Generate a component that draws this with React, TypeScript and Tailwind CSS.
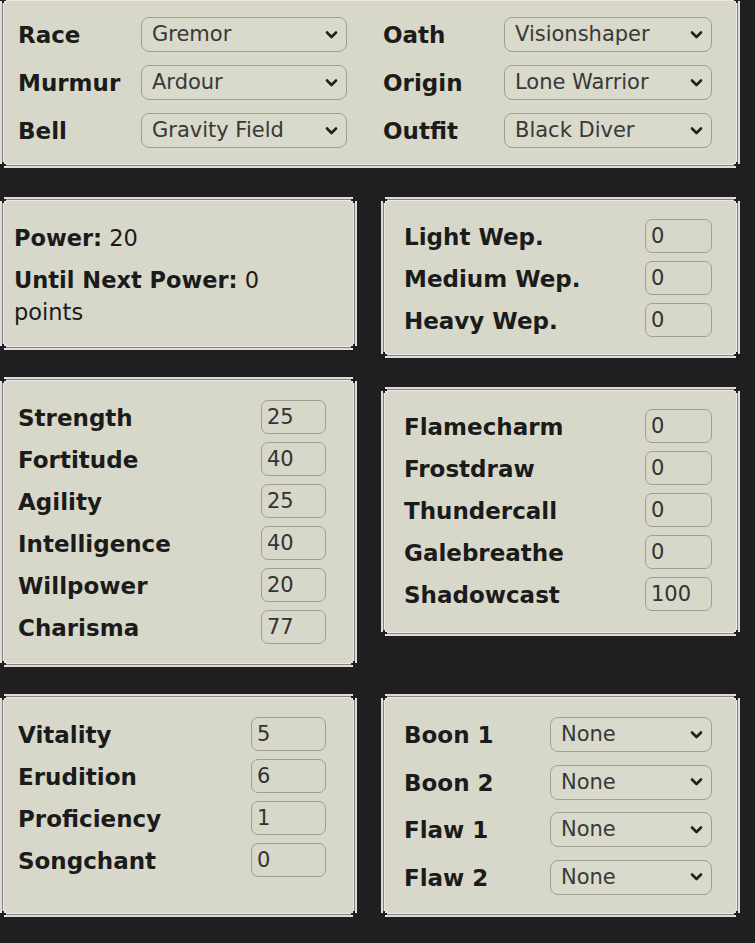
import type { ReactNode } from 'react'
import clsx from 'clsx'

const frame =
  'relative bg-[#d8d8ca] shadow-[inset_0_0_0_2px_#e2dada,inset_0_0_0_3px_#888080,inset_0_0_0_4px_#eee8e8]'

function Corner({ className }: { className: string }) {
  return <span className={clsx('absolute h-[6px] w-[6px] bg-[#1f1f1f] border-dotted border-[#ebe4e4]', className)} />
}

function Panel({ className, children }: { className?: string; children: ReactNode }) {
  return (
    <div className={clsx(frame, className)}>
      <Corner className="left-0 top-0 border-b-2 border-r-2" />
      <Corner className="right-0 top-0 border-b-2 border-l-2" />
      <Corner className="bottom-0 left-0 border-r-2 border-t-2" />
      <Corner className="bottom-0 right-0 border-l-2 border-t-2" />
      {children}
    </div>
  )
}

function Select({ value, className }: { value: string; className?: string }) {
  return (
    <div className={clsx('relative h-[35px]', className)}>
      <select
        defaultValue={value}
        className="h-full w-full appearance-none rounded-[8px] border border-[#a19f91] bg-[#d9d9cc] pl-[10px] text-[21px] leading-none text-[#383838] outline-none"
      >
        <option>{value}</option>
      </select>
      <svg
        className="pointer-events-none absolute right-[9px] top-1/2 -translate-y-1/2"
        width="13"
        height="9"
        viewBox="0 0 13 9"
        fill="none"
      >
        <path d="M2 2l4.5 4.5L11 2" stroke="#222" strokeWidth="2.6" strokeLinecap="round" strokeLinejoin="round" />
      </svg>
    </div>
  )
}

function NumberBox({ value, className }: { value: string; className?: string }) {
  return (
    <input
      defaultValue={value}
      className={clsx(
        'h-[34px] rounded-[7px] border border-[#a19f91] bg-transparent pl-[5px] text-[21px] text-[#333] outline-none',
        className,
      )}
    />
  )
}

function Label({ children, className }: { children: ReactNode; className?: string }) {
  return (
    <span className={clsx('translate-y-[1px] text-[23px] font-bold leading-none text-[#1b1b1b]', className)}>
      {children}
    </span>
  )
}

function StatRows({ rows, boxClass }: { rows: [string, string][]; boxClass: string }) {
  return (
    <div className="flex flex-col gap-[8px]">
      {rows.map(([name, value]) => (
        <div key={name} className="flex h-[34px] items-center justify-between">
          <Label>{name}</Label>
          <NumberBox value={value} className={boxClass} />
        </div>
      ))}
    </div>
  )
}

const identity: [string, string, string, string][] = [
  ['Race', 'Gremor', 'Oath', 'Visionshaper'],
  ['Murmur', 'Ardour', 'Origin', 'Lone Warrior'],
  ['Bell', 'Gravity Field', 'Outfit', 'Black Diver'],
]

export default function App() {
  return (
    <div className="min-h-screen overflow-hidden bg-[#1f1f1f] font-['DejaVu_Sans',sans-serif]">
      <div className="w-[740px]">
        <Panel className="-mt-[3px] pb-[20px] pl-[18px] pt-[20px]">
          <div className="grid grid-cols-[123px_206px_157px_208px] items-center gap-y-[13px]">
            {identity.map(([a, av, b, bv]) => (
              <div key={a} className="contents">
                <Label>{a}</Label>
                <Select value={av} />
                <Label className="pl-[36px]">{b}</Label>
                <Select value={bv} />
              </div>
            ))}
          </div>
        </Panel>

        <div className="mt-[29px] flex items-start gap-[24px]">
          <div className="flex w-[357px] flex-col gap-[27px]">
            <Panel className="pb-[22px] pl-[14px] pr-[34px] pt-[25px] text-[22.5px] leading-[32px] text-[#1b1b1b]">
              <p>
                <b>Power:</b> 20
              </p>
              <p className="mt-[10px]">
                <b>Until Next Power:</b> 0 points
              </p>
            </Panel>
            <Panel className="pb-[23px] pl-[18px] pr-[31px] pt-[23px]">
              <StatRows
                boxClass="w-[65px]"
                rows={[
                  ['Strength', '25'],
                  ['Fortitude', '40'],
                  ['Agility', '25'],
                  ['Intelligence', '40'],
                  ['Willpower', '20'],
                  ['Charisma', '77'],
                ]}
              />
            </Panel>
          </div>

          <div className="flex w-[359px] flex-col gap-[29px]">
            <Panel className="pb-[21px] pl-[23px] pr-[28px] pt-[22px]">
              <StatRows
                boxClass="w-[67px]"
                rows={[
                  ['Light Wep.', '0'],
                  ['Medium Wep.', '0'],
                  ['Heavy Wep.', '0'],
                ]}
              />
            </Panel>
            <Panel className="pb-[25px] pl-[23px] pr-[28px] pt-[22px]">
              <StatRows
                boxClass="w-[67px]"
                rows={[
                  ['Flamecharm', '0'],
                  ['Frostdraw', '0'],
                  ['Thundercall', '0'],
                  ['Galebreathe', '0'],
                  ['Shadowcast', '100'],
                ]}
              />
            </Panel>
          </div>
        </div>

        <div className="mt-[27px] grid grid-cols-[357px_359px] gap-x-[24px]">
          <Panel className="pl-[18px] pr-[31px] pt-[23px]">
            <StatRows
              boxClass="w-[75px]"
              rows={[
                ['Vitality', '5'],
                ['Erudition', '6'],
                ['Proficiency', '1'],
                ['Songchant', '0'],
              ]}
            />
          </Panel>
          <Panel className="pb-[22px] pl-[23px] pr-[28px] pt-[23px]">
            <div className="flex flex-col gap-[12.5px]">
              {['Boon 1', 'Boon 2', 'Flaw 1', 'Flaw 2'].map((name) => (
                <div key={name} className="flex items-center justify-between">
                  <Label>{name}</Label>
                  <Select value="None" className="w-[162px]" />
                </div>
              ))}
            </div>
          </Panel>
        </div>
        <div className="h-[40px]" />
      </div>
    </div>
  )
}
